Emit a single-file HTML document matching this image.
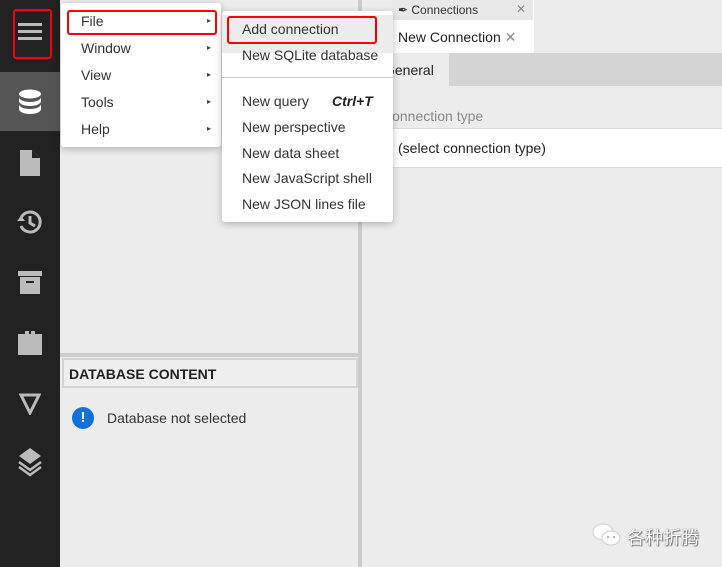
<!DOCTYPE html>
<html><head><meta charset="utf-8"><style>
*{box-sizing:border-box;margin:0;padding:0}
body{width:722px;height:567px;overflow:hidden;background:#ececec;font-family:"Liberation Sans","Noto Sans CJK SC",sans-serif;font-size:14px;color:#222;position:relative}
.abs{position:absolute}
.side{left:0;top:0;width:60px;height:567px;background:#222}
.menu{background:#fff;border-radius:3px;box-shadow:0 2px 8px rgba(0,0,0,.25)}
.mi{position:absolute;left:20px;font-size:14px;color:#333}
.arr{position:absolute;left:146px;font-size:8px;color:#444}
.red{position:absolute;border:2px solid #f00;border-radius:3px}
</style></head><body>
<div class="abs side">
  <div class="abs" style="left:0;top:72px;width:60px;height:59px;background:#555"></div>
  <div class="red" style="left:13px;top:9px;width:39px;height:50px;border-width:2px"></div>
  <div class="abs" style="left:18px;top:23px;width:24px;height:3px;background:#bbb"></div>
  <div class="abs" style="left:18px;top:30px;width:24px;height:3px;background:#bbb"></div>
  <div class="abs" style="left:18px;top:37px;width:24px;height:3px;background:#bbb"></div>
  <svg class="abs" style="left:18px;top:89px" width="24" height="26" viewBox="0 0 24 26"><ellipse cx="12" cy="5" rx="11" ry="4.5" fill="#fff"/><path d="M1 8c0 3 5 5 11 5s11-2 11-5v4c0 3-5 5-11 5S1 15 1 12z" fill="#fff"/><path d="M1 15c0 3 5 5 11 5s11-2 11-5v5c0 3-5 5-11 5S1 23 1 20z" fill="#fff"/></svg>
  <svg class="abs" style="left:19px;top:149px" width="22" height="28" viewBox="0 0 22 28"><path d="M1 1h12l8 8v18H1z" fill="#bbb"/><path d="M13 1v8h8z" fill="#222"/></svg>
  <svg class="abs" style="left:16px;top:208px" width="28" height="28" viewBox="0 0 28 28" fill="none" stroke="#bbb" stroke-width="3"><path d="M5 10a10 10 0 1 1 0 8"/><path d="M14 8v7l5 3"/><path d="M1 10h7" stroke-width="0"/><path d="M1 13l4-5 4 5z" fill="#bbb" stroke="none"/></svg>
  <svg class="abs" style="left:18px;top:271px" width="24" height="24" viewBox="0 0 24 24"><rect x="0" y="0" width="24" height="5" fill="#bbb"/><rect x="2" y="6" width="20" height="17" fill="#bbb"/><rect x="8" y="10" width="8" height="2" fill="#222"/></svg>
  <svg class="abs" style="left:18px;top:331px" width="24" height="24" viewBox="0 0 24 24"><path d="M0 3h7V0h4v3h2V0h4v3h7v21H0z" fill="#bbb"/></svg>
  <svg class="abs" style="left:19px;top:393px" width="22" height="22" viewBox="0 0 22 22"><path d="M2 2h18L11 20z" fill="none" stroke="#bbb" stroke-width="3"/></svg>
  <svg class="abs" style="left:18px;top:447px" width="24" height="32" viewBox="0 0 24 32"><path d="M12 1l11 8-11 8L1 9z" fill="#bbb"/><path d="M1 15l11 8 11-8" fill="none" stroke="#bbb" stroke-width="2.5"/><path d="M1 20l11 8 11-8" fill="none" stroke="#bbb" stroke-width="2.5"/></svg>
</div>
<!-- left panel -->
<div class="abs" style="left:358px;top:0;width:4px;height:567px;background:#ccc"></div>
<div class="abs" style="left:60px;top:353px;width:298px;height:4px;background:#ccc"></div>
<div class="abs" style="left:62px;top:358px;width:296px;height:30px;background:#eee;border:2px solid #d4d4d4;font-weight:bold;font-size:14px;padding:6px 5px;color:#222">DATABASE CONTENT</div>
<div class="abs" style="left:72px;top:407px;width:22px;height:22px;border-radius:50%;background:#1470dd;color:#fff;font-weight:bold;font-size:15px;text-align:center;line-height:22px">!</div>
<div class="abs" style="left:107px;top:410px;font-size:14px;color:#333">Database not selected</div>
<!-- right area -->
<div class="abs" style="left:362px;top:0;width:360px;height:53px;background:#ececec"></div>
<div class="abs" style="left:392px;top:0;width:142px;height:20px;background:#e8e8e8;border-right:1px solid #fff;font-size:12px;padding:3px 0 0 6px;color:#333">✒ Connections<span style="position:absolute;left:124px;top:2px;color:#888">✕</span></div>
<div class="abs" style="left:392px;top:20px;width:142px;height:33px;background:#fff;font-size:14px;padding:9px 0 0 6px;color:#222">New Connection <span style="color:#888">✕</span></div>
<div class="abs" style="left:362px;top:53px;width:360px;height:33px;background:#d4d4d4"></div>
<div class="abs" style="left:362px;top:53px;width:87px;height:33px;background:#ececec;font-size:14px;padding:9px 0 0 22px;color:#222">General</div>
<div class="abs" style="left:382px;top:108px;font-size:14px;color:#888">Connection type</div>
<div class="abs" style="left:362px;top:128px;width:360px;height:40px;background:#fff;border-top:1px solid #ddd;border-bottom:1px solid #ddd;font-size:14px;padding:11px 0 0 36px;color:#222">(select connection type)</div>
<!-- menus -->
<div class="abs menu" style="left:61px;top:3px;width:160px;height:144px">
  <div class="mi" style="top:10px">File</div><div class="arr" style="top:13px">▸</div>
  <div class="mi" style="top:37px">Window</div><div class="arr" style="top:40px">▸</div>
  <div class="mi" style="top:64px">View</div><div class="arr" style="top:67px">▸</div>
  <div class="mi" style="top:91px">Tools</div><div class="arr" style="top:94px">▸</div>
  <div class="mi" style="top:118px">Help</div><div class="arr" style="top:121px">▸</div>
  <div class="red" style="left:6px;top:7px;width:150px;height:25px"></div>
</div>
<div class="abs menu" style="left:222px;top:11px;width:171px;height:211px">
  <div class="abs" style="left:0;top:4px;width:171px;height:38px;background:#ececec"></div>
  <div class="mi" style="top:10px">Add connection</div>
  <div class="mi" style="top:36px">New SQLite database</div>
  <div class="abs" style="left:0;top:66px;width:171px;height:1px;background:#ccc"></div>
  <div class="mi" style="top:82px">New query</div>
  <div class="abs" style="left:110px;top:82px;font-weight:bold;font-style:italic;color:#222">Ctrl+T</div>
  <div class="mi" style="top:108px">New perspective</div>
  <div class="mi" style="top:134px">New data sheet</div>
  <div class="mi" style="top:159px">New JavaScript shell</div>
  <div class="mi" style="top:185px">New JSON lines file</div>
  <div class="red" style="left:5px;top:5px;width:150px;height:28px"></div>
</div>
<!-- watermark -->
<svg class="abs" style="left:592px;top:522px" width="30" height="26" viewBox="0 0 30 26"><ellipse cx="11" cy="10" rx="10" ry="8" fill="#fff" stroke="#ccc"/><ellipse cx="19" cy="16" rx="9" ry="7" fill="#fff" stroke="#ccc"/><circle cx="16" cy="15" r="1" fill="#999"/><circle cx="22" cy="15" r="1" fill="#999"/></svg>
<div class="abs" style="left:627px;top:524px;font-size:18px;color:#fff;font-family:'Noto Sans CJK SC',sans-serif;text-shadow:0 0 1px #555,1px 1px 1px #777">各种折腾</div>
</body></html>
